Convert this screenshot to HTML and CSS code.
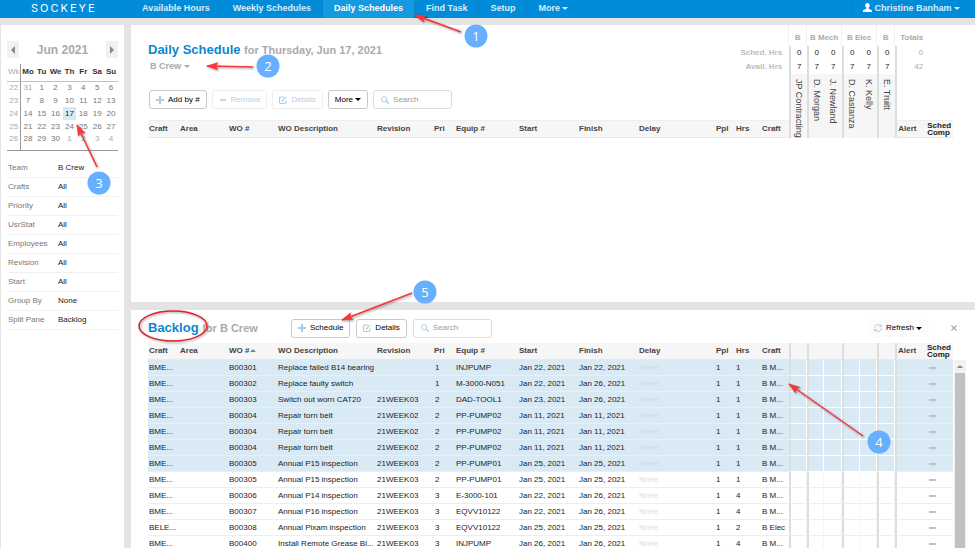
FILE: index.html
```html
<!DOCTYPE html>
<html lang="en">
<head>
    <meta charset="UTF-8">
    <meta name="viewport" content="width=device-width, initial-scale=1.0">
    <title>Sockeye - Daily Schedules</title>
    <link rel="stylesheet" href="styles.css">
</head>
<body>
    <!-- top navigation -->
    <nav class="navbar">
        <a href="#" class="logo">SOCKEYE</a>
        <a href="#">Available Hours</a>
        <a href="#">Weekly Schedules</a>
        <a href="#" class="active">Daily Schedules</a>
        <a href="#">Find Task</a>
        <a href="#">Setup</a>
        <a href="#">More <span class="caret"></span></a>
        <a href="#" class="user">
            <svg width="9" height="9" viewBox="0 0 9 9"><path fill="#fff" d="M4.500 0c1.500 0 2.200 1 2.200 2.300 0 1.200-.5 2-1.100 2.600v.8L8.500 7c.4.200.5.500.5 2H0c0-1.500.1-1.800.5-2l2.900-1.300v-.8c-.6-.6-1.100-1.400-1.100-2.600C2.300 1 3 0 4.500 0z"/></svg>
            Christine Banham <span class="caret"></span>
        </a>
    </nav>

    <div class="layout">
        <!-- sidebar: calendar and filters -->
        <aside class="sidebar">
            <div class="month">
                <button type="button" aria-label="Previous month"><span class="arrow-left"></span></button>
                <span>Jun 2021</span>
                <button type="button" aria-label="Next month"><span class="arrow-right"></span></button>
            </div>
            <table class="calendar">
                <thead>
                    <tr><th>Wk</th><th>Mo</th><th>Tu</th><th>We</th><th>Th</th><th>Fr</th><th>Sa</th><th>Su</th></tr>
                </thead>
                <tbody>
                    <tr><td>22</td><td class="other">31</td><td>1</td><td>2</td><td>3</td><td>4</td><td>5</td><td>6</td></tr>
                    <tr><td>23</td><td>7</td><td>8</td><td>9</td><td>10</td><td>11</td><td>12</td><td>13</td></tr>
                    <tr><td>24</td><td>14</td><td>15</td><td>16</td><td class="today">17</td><td>18</td><td>19</td><td>20</td></tr>
                    <tr><td>25</td><td>21</td><td>22</td><td>23</td><td>24</td><td>25</td><td>26</td><td>27</td></tr>
                    <tr><td>26</td><td>28</td><td>29</td><td>30</td><td class="other">1</td><td class="other">2</td><td class="other">3</td><td class="other">4</td></tr>
                </tbody>
            </table>
            <dl class="filters">
                <div><dt>Team</dt><dd>B Crew</dd></div>
                <div><dt>Crafts</dt><dd>All</dd></div>
                <div><dt>Priority</dt><dd>All</dd></div>
                <div><dt>UsrStat</dt><dd>All</dd></div>
                <div><dt>Employees</dt><dd>All</dd></div>
                <div><dt>Revision</dt><dd>All</dd></div>
                <div><dt>Start</dt><dd>All</dd></div>
                <div><dt>Group By</dt><dd>None</dd></div>
                <div><dt>Split Pane</dt><dd>Backlog</dd></div>
            </dl>
        </aside>

        <main class="panes">
            <!-- daily schedule -->
            <section class="pane schedule">
                <div class="schedule-head">
                    <div class="head-left">
                        <h1>Daily Schedule <small>for Thursday, Jun 17, 2021</small></h1>
                        <button type="button" class="crew">B Crew <span class="caret"></span></button>
                        <div class="toolbar">
                            <button type="button" class="btn"><svg class="icon" viewBox="0 0 8 8"><path d="M4 0v8M0 4h8" stroke-width="2"/></svg>Add by #</button>
                            <button type="button" class="btn" disabled><svg class="icon" viewBox="0 0 8 8"><path d="M1 4h6" stroke-width="1.500"/></svg>Remove</button>
                            <button type="button" class="btn" disabled><svg class="icon" viewBox="0 0 8 8"><path d="M5 1H2Q.5 1 .5 2.500V6Q.5 7.500 2 7.500h3.500Q7 7.500 7 6V4.500M3 5.200 7.200.9M3 5.200l1.500-.4" stroke-width="1.200"/></svg>Details</button>
                            <button type="button" class="btn">More <span class="caret"></span></button>
                            <label class="search"><svg class="icon" viewBox="0 0 8 8"><circle cx="3.200" cy="3.200" r="2.600" stroke-width="1"/><path d="M5.200 5.200 7.700 7.700" stroke-width="1.300"/></svg><input type="text" placeholder="Search" aria-label="Search schedule"></label>
                        </div>
                    </div>
                    <table class="grid hours">
                        <colgroup>
                            <col class="c-craft"><col class="c-area"><col class="c-wo"><col class="c-desc"><col class="c-rev"><col class="c-pri"><col class="c-equip"><col class="c-date"><col class="c-date"><col class="c-delay"><col class="c-ppl"><col class="c-hrs"><col class="c-craft2">
                            <col class="c-emp"><col class="c-emp-s"><col class="c-emp"><col class="c-emp"><col class="c-emp-s"><col class="c-emp">
                            <col class="c-end"><col class="c-end">
                        </colgroup>
                        <tr class="groups">
                            <td colspan="13"></td>
                            <th>B</th><th colspan="2">B Mech</th><th colspan="2">B Elec</th><th>B</th>
                            <th colspan="2" class="total">Totals</th>
                        </tr>
                        <tr class="numbers">
                            <th colspan="13">Sched. Hrs</th>
                            <td class="g">0</td><td class="g">0</td><td>0</td><td class="g">0</td><td>0</td><td class="g">0</td>
                            <td colspan="2" class="g total">0</td>
                        </tr>
                        <tr class="numbers">
                            <th colspan="13">Avail. Hrs</th>
                            <td class="g">7</td><td class="g">7</td><td>7</td><td class="g">7</td><td>7</td><td class="g">7</td>
                            <td colspan="2" class="g total">42</td>
                        </tr>
                        <tr class="names">
                            <td colspan="13"></td>
                            <th rowspan="2" class="g"><span>JP Contracting</span></th>
                            <th rowspan="2" class="g"><span>D. Morgan</span></th>
                            <th rowspan="2"><span>J. Newland</span></th>
                            <th rowspan="2" class="g"><span>D. Castanza</span></th>
                            <th rowspan="2"><span>K. Kelly</span></th>
                            <th rowspan="2" class="g"><span>E. Truitt</span></th>
                            <td colspan="2" class="g"></td>
                        </tr>
                        <tr class="columns">
                            <th>Craft</th><th>Area</th><th>WO #</th><th>WO Description</th><th>Revision</th><th>Pri</th><th>Equip #</th><th>Start</th><th>Finish</th><th>Delay</th><th>Ppl</th><th>Hrs</th><th>Craft</th>
                            <th class="g">Alert</th><th class="comp">Sched Comp</th>
                        </tr>
                    </table>
                </div>
            </section>

            <!-- backlog -->
            <section class="pane backlog">
                <div class="backlog-head">
                    <h2>Backlog <small>for B Crew</small></h2>
                    <div class="toolbar">
                        <button type="button" class="btn"><svg class="icon" viewBox="0 0 8 8"><path d="M4 0v8M0 4h8" stroke-width="2"/></svg>Schedule</button>
                        <button type="button" class="btn"><svg class="icon" viewBox="0 0 8 8"><path d="M5 1H2Q.5 1 .5 2.500V6Q.5 7.500 2 7.500h3.500Q7 7.500 7 6V4.500M3 5.200 7.200.9M3 5.200l1.500-.4" stroke-width="1.200"/></svg>Details</button>
                        <label class="search"><svg class="icon" viewBox="0 0 8 8"><circle cx="3.200" cy="3.200" r="2.600" stroke-width="1"/><path d="M5.200 5.200 7.700 7.700" stroke-width="1.300"/></svg><input type="text" placeholder="Search" aria-label="Search backlog"></label>
                    </div>
                    <button type="button" class="btn refresh"><svg class="icon" viewBox="0 0 8 8"><path d="M.6 3.600A3.400 3.400 0 0 1 6.800 2M7.400.3V2.600H5.200M7.400 4.400A3.400 3.400 0 0 1 1.200 6M.6 7.700V5.400H2.800" stroke-width="1"/></svg>Refresh <span class="caret"></span></button>
                    <button type="button" class="close" aria-label="Close"><svg width="6" height="6" viewBox="0 0 6 6"><path d="M.5.5l5 5M5.500.5l-5 5" stroke="#aaa" stroke-width="1.200"/></svg></button>
                </div>
                <div class="backlog-body">
                    <table class="grid">
                        <colgroup>
                            <col class="c-craft"><col class="c-area"><col class="c-wo"><col class="c-desc"><col class="c-rev"><col class="c-pri"><col class="c-equip"><col class="c-date"><col class="c-date"><col class="c-delay"><col class="c-ppl"><col class="c-hrs"><col class="c-craft2">
                            <col class="c-emp"><col class="c-emp-s"><col class="c-emp"><col class="c-emp"><col class="c-emp-s"><col class="c-emp">
                            <col class="c-end"><col class="c-end">
                        </colgroup>
                        <thead>
                            <tr class="columns">
                                <th>Craft</th><th>Area</th><th>WO #<span class="sort"></span></th><th>WO Description</th><th>Revision</th><th>Pri</th><th>Equip #</th><th>Start</th><th>Finish</th><th>Delay</th><th>Ppl</th><th>Hrs</th><th>Craft</th>
                                <th class="g"></th><th class="g"></th><th></th><th class="g"></th><th></th><th class="g"></th>
                                <th class="g">Alert</th><th class="comp">Sched Comp</th>
                            </tr>
                        </thead>
                        <tbody id="rows"></tbody>
                    </table>
                    <div class="scrollbar"><span class="arrow-up"></span><i></i></div>
                </div>
            </section>
        </main>
    </div>

    <!-- step markers -->
    <svg class="steps" width="975" height="548" viewBox="0 0 975 548">
        <defs>
            <marker id="head" markerUnits="userSpaceOnUse" markerWidth="12" markerHeight="8" refX="11" refY="4" orient="auto"><path d="M0 0l12 4-12 4 2-4z" fill="#f8353a"/></marker>
        </defs>
        <g class="arrows">
            <path d="M461 32 415 15"/>
            <path d="M253 67 207 66"/>
            <path d="M97 167 77 125"/>
            <path d="M863 436 789 384"/>
            <path d="M412 293 342 320"/>
        </g>
        <ellipse cx="173" cy="326" rx="34" ry="15"/>
        <g class="dots">
            <circle cx="476" cy="36" r="11.500"/><text x="476" y="41">1</text>
            <circle cx="268" cy="66" r="11.500"/><text x="268" y="71">2</text>
            <circle cx="99" cy="183" r="11.500"/><text x="99" y="188">3</text>
            <circle cx="879" cy="442" r="11.500"/><text x="879" y="447">4</text>
            <circle cx="425" cy="292" r="11.500"/><text x="425" y="297">5</text>
        </g>
    </svg>

    <script>
        // craft, wo, description, revision, pri, equip, start, finish, hrs, craft2, selected
        const orders = [
            ["BME...", "B00301", "Replace failed B14 bearing", "", 1, "INJPUMP", "Jan 22, 2021", "Jan 22, 2021", 1, "B M...", true],
            ["BME...", "B00302", "Replace faulty switch", "", 1, "M-3000-N051", "Jan 22, 2021", "Jan 26, 2021", 1, "B M...", true],
            ["BME...", "B00303", "Switch out worn CAT20", "21WEEK03", 2, "DAD-TOOL1", "Jan 23, 2021", "Jan 26, 2021", 1, "B M...", true],
            ["BME...", "B00304", "Repair torn belt", "21WEEK02", 2, "PP-PUMP02", "Jan 11, 2021", "Jan 11, 2021", 1, "B M...", true],
            ["BME...", "B00304", "Repair torn belt", "21WEEK02", 2, "PP-PUMP02", "Jan 11, 2021", "Jan 11, 2021", 1, "B M...", true],
            ["BME...", "B00304", "Repair torn belt", "21WEEK02", 2, "PP-PUMP02", "Jan 11, 2021", "Jan 11, 2021", 1, "B M...", true],
            ["BME...", "B00305", "Annual P15 inspection", "21WEEK03", 2, "PP-PUMP01", "Jan 25, 2021", "Jan 25, 2021", 1, "B M...", true],
            ["BME...", "B00305", "Annual P15 inspection", "21WEEK03", 2, "PP-PUMP01", "Jan 25, 2021", "Jan 25, 2021", 1, "B M...", false],
            ["BME...", "B00306", "Annual P14 inspection", "21WEEK03", 3, "E-3000-101", "Jan 22, 2021", "Jan 26, 2021", 4, "B M...", false],
            ["BME...", "B00307", "Annual P16 inspection", "21WEEK03", 3, "EQVV10122", "Jan 22, 2021", "Jan 26, 2021", 4, "B M...", false],
            ["BELE...", "B00308", "Annual Pixam inspection", "21WEEK03", 3, "EQVV10122", "Jan 25, 2021", "Jan 25, 2021", 2, "B Elec", false],
            ["BME...", "B00400", "Install Remote Grease Bl...", "21WEEK03", 3, "INJPUMP", "Jan 26, 2021", "Jan 26, 2021", 4, "B M...", false]
        ];

        const emp = '<td class="g e"></td><td class="g e"></td><td class="e"></td><td class="g e"></td><td class="e"></td><td class="g e"></td>';

        document.getElementById("rows").innerHTML = orders.map(o => `
            <tr class="${o[10] ? "selected" : ""}">
                <td>${o[0]}</td><td></td><td>${o[1]}</td><td>${o[2]}</td><td>${o[3]}</td><td>${o[4]}</td>
                <td>${o[5]}</td><td>${o[6]}</td><td>${o[7]}</td><td class="none">None</td><td>1</td><td>${o[8]}</td><td>${o[9]}</td>
                ${emp}<td class="g"></td><td class="dash"><i></i></td>
            </tr>`).join("");
    </script>
</body>
</html>
```
FILE: styles.css
```css
* {
    box-sizing: border-box;
}
body {
    margin: 0;
    height: 100vh;
    display: flex;
    flex-direction: column;
    overflow: hidden;
    background-color: #e4e4e4;
    font-family: "Liberation Sans", Arial, sans-serif;
    font-size: 8px;
    line-height: 10px;
    color: #222;
}
button, input {
    font: inherit;
    color: inherit;
}
table {
    border-collapse: collapse;
    table-layout: fixed;
    width: 100%;
}
th, td {
    padding: 0;
    text-align: left;
    white-space: nowrap;
}
.caret {
    display: inline-block;
    border: 3px solid transparent;
    border-top-color: currentColor;
    border-bottom: 0;
    vertical-align: middle;
}

/* navbar */
.navbar {
    display: flex;
    height: 18px;
    flex-shrink: 0;
    background-color: #008cd8;
}
.navbar a {
    padding: 0 11px;
    border-right: 1px solid #0584ca;
    color: #d9eefa;
    font-size: 9px;
    font-weight: bold;
    line-height: 17px;
    text-decoration: none;
    white-space: nowrap;
}
.navbar .logo {
    width: 131px;
    padding: 0 0 0 31px;
    color: #fff;
    font-family: Inter, sans-serif;
    font-size: 11px;
    font-weight: 400;
    letter-spacing: 2px;
}
.navbar .active {
    background-color: #1599e0;
    color: #fff;
}
.navbar a:nth-last-child(2) {
    border-right: 0;
}
.navbar .user {
    margin-left: auto;
    padding-right: 15px;
    border-left: 1px solid #0584ca;
    border-right: 0;
}
.user svg {
    vertical-align: -1px;
}

.layout {
    display: flex;
    flex: 1;
    gap: 7px;
    min-height: 0;
    padding: 7px 0 0 1px;
}

/* sidebar */
.sidebar {
    width: 123px;
    flex-shrink: 0;
    padding: 16px 6px 0;
    background-color: #fff;
}
.month {
    display: flex;
    justify-content: space-between;
    align-items: center;
    color: #aaa;
    font-size: 12px;
    font-weight: bold;
}
.month button {
    display: flex;
    justify-content: center;
    align-items: center;
    width: 12px;
    height: 17px;
    padding: 0;
    border: 0;
    background-color: #f1f1f1;
}
.arrow-left, .arrow-right {
    border: 4px solid transparent;
    border-right-color: #888;
    border-left: 0;
}
.arrow-right {
    border-left: 4px solid #888;
    border-right: 0;
}
.calendar {
    margin-top: 6px;
    border-bottom: 1px solid #999;
    color: #777;
}
.calendar th, .calendar td {
    height: 13px;
    text-align: center;
}
.calendar th {
    height: 17px;
    border-bottom: 1px solid #b5c5d3;
    color: #333;
}
.calendar th:first-child, .calendar td:first-child {
    border-right: 1px solid #999;
    color: #aaa;
    font-weight: normal;
}
.calendar tr:last-child td {
    height: 17px;
    padding-bottom: 4px;
}
.calendar .other {
    color: #aaa;
}
.calendar .today {
    background-color: #d6e9f5;
    color: #222;
}
.filters {
    margin: 8px 0 0;
}
.filters div {
    display: flex;
    height: 19px;
    padding-left: 1px;
    border-bottom: 1px solid #f1f1f1;
    line-height: 18px;
}
.filters dt {
    width: 50px;
    color: #777;
}
.filters dd {
    margin: 0;
}

/* panes */
.panes {
    display: flex;
    flex: 1;
    flex-direction: column;
    gap: 8px;
    min-width: 0;
}
.pane {
    flex: 238 1 0;
    min-height: 0;
    padding: 0 9px 0 17px;
    overflow: hidden;
    background-color: #fff;
}
.schedule {
    flex-grow: 277;
    padding-right: 22px;
}
h1, h2 {
    margin: 0;
    color: #0d87cf;
    font-size: 13px;
    line-height: 16px;
}
h1 small, h2 small {
    color: #aaa;
    font-size: 11px;
}
.schedule-head {
    display: grid;
}
.schedule-head > * {
    grid-area: 1 / 1;
}
.head-left {
    z-index: 1;
    justify-self: start;
    align-self: start;
    padding-top: 17px;
}
.crew {
    display: block;
    padding: 3px 2px;
    border: 0;
    background: none;
    color: #aaa;
    font-size: 9px;
    font-weight: bold;
}
.toolbar {
    display: flex;
    gap: 6px;
}
.head-left .toolbar {
    gap: 5px;
    margin-top: 16px;
    padding-left: 1px;
}
.btn, .search {
    display: flex;
    align-items: center;
    gap: 4px;
    height: 19px;
    padding: 0 6px;
    border: 1px solid #c8c8c8;
    border-radius: 3px;
    background-color: #fff;
    color: #000;
    white-space: nowrap;
}
.btn .caret {
    margin-left: -2px;
}
.btn:disabled {
    border-color: #eee;
    color: #b9cfe0;
}
.icon {
    width: 8px;
    height: 8px;
    flex-shrink: 0;
    fill: none;
    stroke: #a9cbe6;
}
.search {
    width: 79px;
    padding: 0 7px;
    border-color: #ddd;
}
.search input {
    width: 100%;
    padding: 0;
    border: 0;
    outline: 0;
    background: none;
}
.search input::placeholder {
    color: #999;
}

/* tables */
.c-craft { width: 31px; }
.c-area { width: 49px; }
.c-wo { width: 49px; }
.c-desc { width: 99px; }
.c-rev { width: 57px; }
.c-pri { width: 22px; }
.c-equip { width: 63px; }
.c-date { width: 60px; }
.c-delay { width: 77px; }
.c-ppl { width: 20px; }
.c-hrs { width: 26px; }
.c-craft2 { width: 28px; }
.c-emp { width: 18px; }
.c-emp-s { width: 17px; }
.c-end { width: 29px; }

.grid {
    border-collapse: separate;
    border-spacing: 0;
}
.grid .g {
    border-left: 2px solid #ddd;
}
.columns th {
    height: 17px;
    padding-left: 1px;
    background-color: #f6f6f6;
    border-bottom: 1px solid #e8e8e8;
    color: #444;
}
.columns .comp {
    padding-left: 3px;
    line-height: 7px;
    white-space: normal;
    color: #222;
}
.hours .columns th {
    height: 18px;
    border-top: 1px solid #eee;
}
.groups th, .groups td {
    height: 21px;
    padding-top: 4px;
    border-right: 1px solid #f1f1f1;
    color: #aaa;
    text-align: center;
}
.groups .total {
    border: 0;
}
.numbers th, .numbers td {
    height: 14px;
    text-align: center;
}
.numbers th {
    padding-right: 7px;
    color: #bbb;
    text-align: right;
}
.numbers .total, .groups .total {
    padding-right: 30px;
    color: #aaa;
    text-align: right;
}
.names td {
    height: 45px;
}
.hours .names th {
    background-color: #f6f6f6;
    color: #444;
    font-size: 9px;
    font-weight: normal;
    vertical-align: top;
}
.names span {
    display: block;
    margin: 0 auto;
    padding-top: 5px;
    line-height: 14px;
    writing-mode: vertical-rl;
}

/* backlog */
.backlog-head {
    display: flex;
    align-items: center;
    height: 33px;
    padding-top: 3px;
}
.backlog-head h2 {
    width: 143px;
}
.refresh {
    margin-left: auto;
    border-color: #fcfcfc;
    background-color: #fcfcfc;
}
.close {
    display: flex;
    margin: 0 7px 0 20px;
    padding: 2px;
    border: 0;
    background: none;
}
.backlog-body {
    display: flex;
    align-items: flex-start;
    gap: 1px;
}
.backlog-body .grid {
    flex: 1;
}
#rows td {
    height: 16px;
    padding-left: 1px;
    border-bottom: 1px solid #eee;
}
#rows td:nth-child(6) {
    padding-left: 2px;
}
#rows .e {
    border-right: 1px solid #f5f5f5;
}
#rows .selected td {
    background-color: #d9eaf5;
}
#rows .selected .e {
    border-right-color: #fff;
    border-bottom-color: #fff;
}
#rows .none {
    color: #ddd;
}
#rows .selected .none {
    color: #c9d8e2;
}
.dash i {
    display: block;
    width: 7px;
    height: 2px;
    margin: 1px auto 0 4px;
    background-color: #bbc3c8;
}
.sort {
    display: inline-block;
    margin-left: 1px;
    border: 3px solid transparent;
    border-top: 0;
    border-bottom-color: #4f8fcc;
    vertical-align: 1px;
}
.scrollbar {
    display: flex;
    flex-direction: column;
    align-items: center;
    width: 12px;
    height: 220px;
    margin-top: 17px;
    background-color: #f1f1f1;
}
.arrow-up {
    margin: 5px 0;
    border: 3px solid transparent;
    border-top: 0;
    border-bottom-color: #888;
}
.scrollbar i {
    flex: 1;
    width: 10px;
    background-color: #c1c1c1;
}

/* step markers lie over the whole page */
.steps {
    position: absolute;
    top: 0;
    left: 0;
    pointer-events: none;
}
.arrows path {
    stroke: #f8353a;
    stroke-width: 1.500;
    marker-end: url(#head);
}
.arrows, .steps ellipse {
    filter: drop-shadow(1px 1px 1px rgba(0, 0, 0, 0.4));
}
.steps ellipse {
    fill: none;
    stroke: #e3202a;
    stroke-width: 1.500;
}
.dots circle {
    fill: #66b0ff;
}
.dots text {
    fill: #fff;
    font-family: "Open Sans", sans-serif;
    font-size: 13px;
    text-anchor: middle;
}
```
